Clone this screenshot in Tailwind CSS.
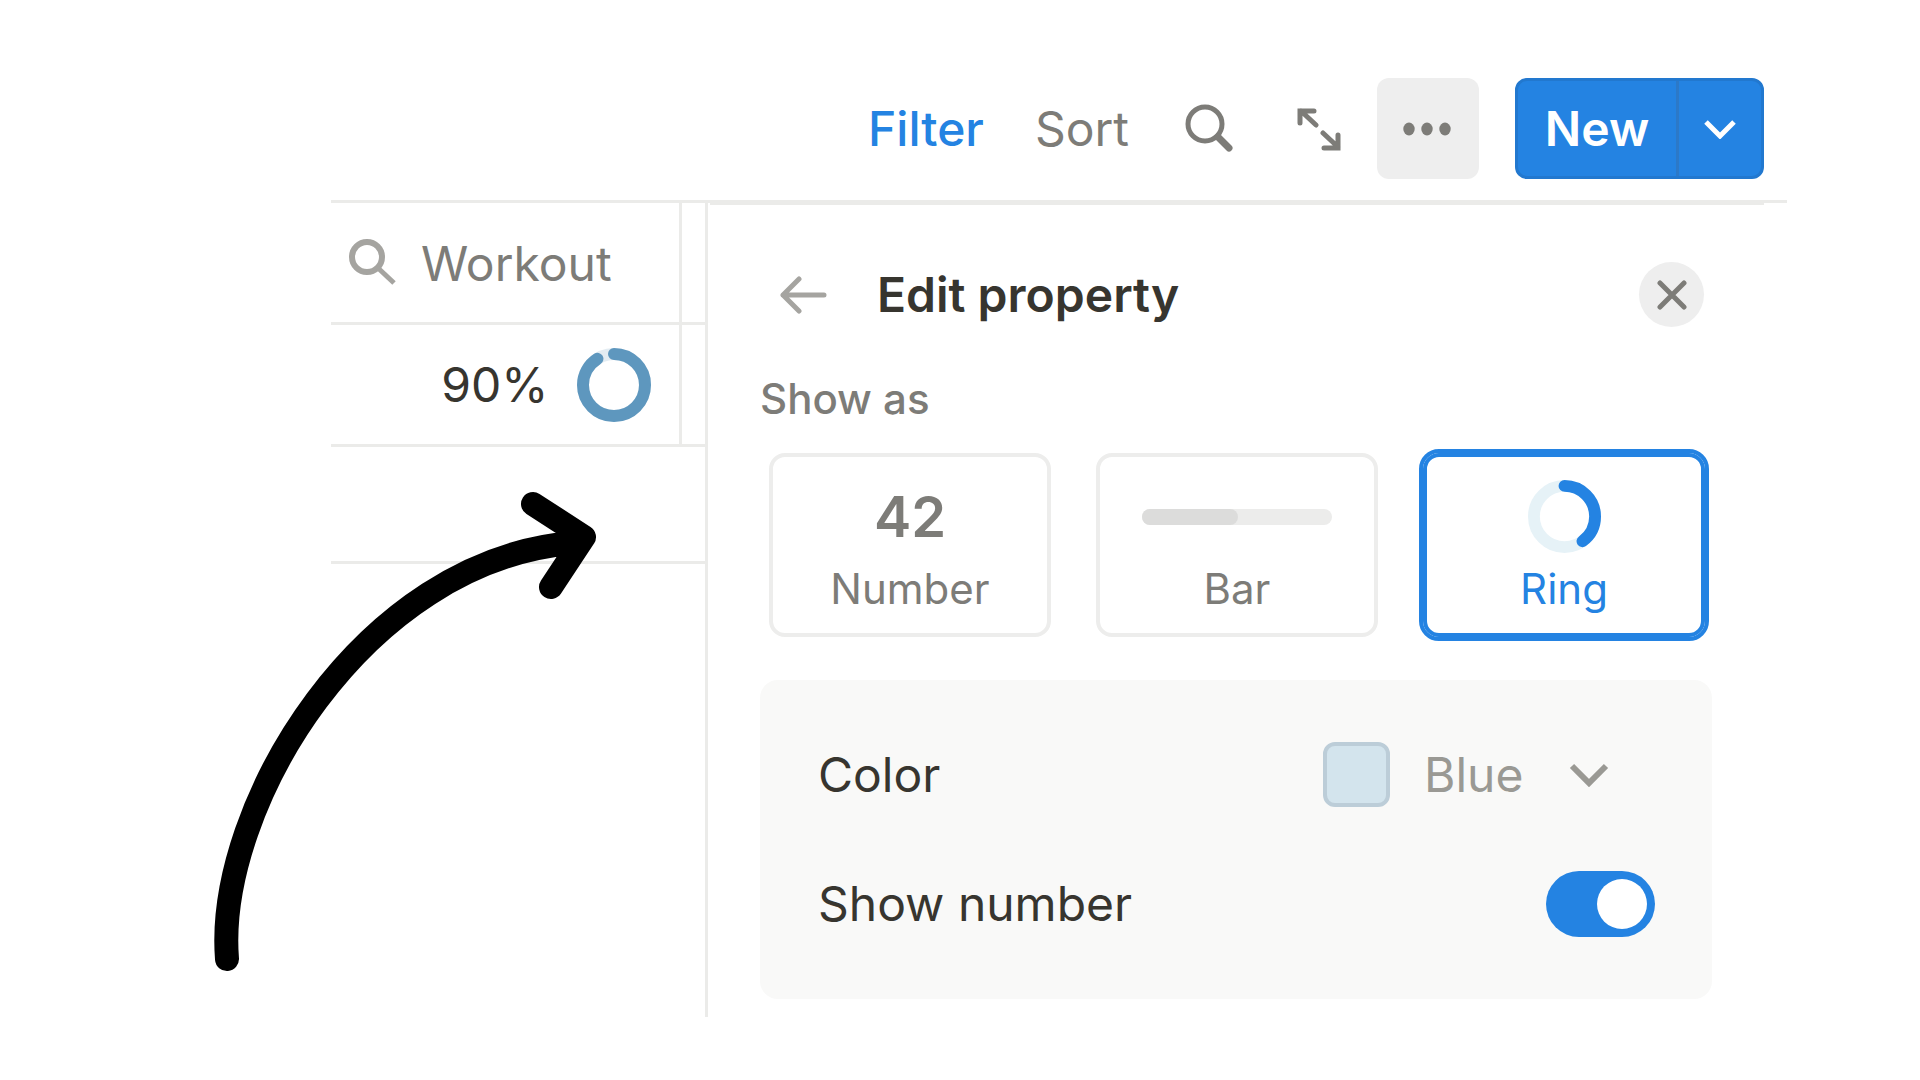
<!DOCTYPE html>
<html lang="en">
<head>
  <meta charset="UTF-8">
  <meta name="viewport" content="width=device-width, initial-scale=1.0">
  <title>Edit property</title>
  <script src="https://cdn.jsdelivr.net/npm/@tailwindcss/browser@4"></script>
</head>
<body class="bg-white font-['Inter',sans-serif] text-[#37352f]">
  <main class="relative pt-[78px] pr-[133px] pl-[331px]">

    <!-- Toolbar -->
    <header class="flex items-center justify-end border-b-3 border-[#ebebe9] pr-[23px] pb-[21px] text-5xl leading-[60px] text-[#7d7c78]">
      <button class="mr-[51px] font-medium text-[#2483e2]">Filter</button>
      <button class="mr-[55px]">Sort</button>
      <button class="mr-[63px]" aria-label="Search">
        <svg class="h-[50px] w-[50px]" viewBox="0 0 50 50" fill="none" stroke="currentColor">
          <circle cx="21" cy="20" r="17" stroke-width="5"/>
          <path d="M34 33l11 11" stroke-width="7" stroke-linecap="round"/>
        </svg>
      </button>
      <button class="mr-9" aria-label="Expand">
        <svg class="h-11 w-11" viewBox="0 0 44 44" fill="none" stroke="currentColor" stroke-width="5" stroke-linecap="round">
          <path d="M3 16V4h14M4 4l15 14M41 28v13H27M41 40L26 26"/>
        </svg>
      </button>
      <button class="mr-9 flex h-[101px] w-[102px] items-center justify-center rounded-xl bg-[#eeeeee]" aria-label="More">
        <svg class="h-4 w-[50px]" viewBox="0 0 50 16" fill="currentColor">
          <ellipse cx="6" cy="8" rx="5.7" ry="6.5"/>
          <ellipse cx="24" cy="8" rx="5.7" ry="6.5"/>
          <ellipse cx="42" cy="8" rx="5.7" ry="6.5"/>
        </svg>
      </button>
      <div class="flex h-[101px] overflow-hidden rounded-xl border-3 border-[#2278cf] bg-[#2483e2] text-white">
        <button class="w-[158px] font-semibold">New</button>
        <button class="flex w-[85px] items-center justify-center border-l-3 border-[#2c79c8]" aria-label="New from template">
          <svg class="h-5 w-8" viewBox="0 0 32 20" fill="none" stroke="currentColor" stroke-width="5">
            <path d="M2 3l14 14L30 3"/>
          </svg>
        </button>
      </div>
    </header>

    <div class="flex">
      <!-- Table -->
      <div class="w-[374px] shrink-0">
        <table class="w-full border-collapse text-5xl leading-[60px]">
          <thead>
            <tr class="h-[120px] border-b-3 border-[#ebebe9]">
              <th class="border-r-3 border-[#ebebe9] p-0 font-normal text-[#7d7c78]">
                <div class="flex items-center pt-1 pl-[18px]">
                  <svg class="h-[50px] w-[50px] text-[#a5a4a0]" viewBox="0 0 50 50" fill="none" stroke="currentColor">
                    <circle cx="18" cy="18" r="15" stroke-width="6"/>
                    <path d="M29 29l16 15" stroke-width="5"/>
                  </svg>
                  <span class="ml-[22px]">Workout</span>
                </div>
              </th>
              <th class="w-[25px] p-0"></th>
            </tr>
          </thead>
          <tbody>
            <tr class="h-[122px] border-b-3 border-[#ebebe9]">
              <td class="border-r-3 border-[#ebebe9] p-0">
                <div class="flex items-center justify-end gap-7 pt-0.5 pr-7">
                  <span>90%</span>
                  <svg class="h-[74px] w-[74px]" viewBox="0 0 74 74" fill="none" stroke-width="12">
                    <circle cx="37" cy="37" r="31" stroke="#e3ecf2"/>
                    <circle cx="37" cy="37" r="31" stroke="#5e97be" stroke-linecap="round" pathLength="100" stroke-dasharray="91 100" transform="rotate(-90 37 37)"/>
                  </svg>
                </div>
              </td>
              <td class="p-0"></td>
            </tr>
            <tr class="h-[117px] border-b-3 border-[#ebebe9]">
              <td class="p-0" colspan="2"></td>
            </tr>
          </tbody>
        </table>
      </div>

      <!-- Property panel -->
      <section class="flex-1 border-l-3 border-[#ebebe9] pb-[18px]">
        <hr class="mr-[23px] ml-0.5 border-t-2 border-[#ebebe9]">
        <div class="pr-[75px] pl-[52px]">
          <div class="flex items-center pt-[57px] pr-2 pl-5">
            <button class="text-[#a5a4a0]" aria-label="Back">
              <svg class="h-10 w-12" viewBox="0 0 48 40" fill="none" stroke="currentColor" stroke-width="5" stroke-linecap="round" stroke-linejoin="round">
                <path d="M19 4L3 20l16 16M3 20h41"/>
              </svg>
            </button>
            <h1 class="ml-[49px] text-5xl leading-[60px] font-semibold">Edit property</h1>
            <button class="ml-auto flex h-[65px] w-[65px] items-center justify-center rounded-full bg-[#eeeeee] text-[#7d7c78]" aria-label="Close">
              <svg class="h-[30px] w-[30px]" viewBox="0 0 30 30" fill="none" stroke="currentColor" stroke-width="5" stroke-linecap="round">
                <path d="M3 3l24 24M27 3L3 27"/>
              </svg>
            </button>
          </div>

          <h2 class="mt-11 text-[42px] leading-[56px] font-medium text-[#7d7c78]" id="show-as">Show as</h2>

          <div class="mt-[26px] grid grid-cols-3 gap-[45px] pr-[7px] pl-[9px] text-[42px] leading-[48px] text-[#7d7c78]" role="radiogroup" aria-labelledby="show-as">
            <label class="flex h-[184px] flex-col items-center rounded-2xl border-4 border-[#ededec] pt-[23px]">
              <input class="sr-only" type="radio" name="show-as" value="number">
              <span class="flex h-[73px] items-center text-[56px] font-semibold">42</span>
              <span class="mt-3">Number</span>
            </label>
            <label class="flex h-[184px] flex-col items-center rounded-2xl border-4 border-[#ededec] pt-[23px]">
              <input class="sr-only" type="radio" name="show-as" value="bar">
              <span class="flex h-[73px] items-center">
                <span class="block h-4 w-[190px] rounded-full bg-[#ececeb]">
                  <span class="block h-4 w-[96px] rounded-full bg-[#dcdcdb]"></span>
                </span>
              </span>
              <span class="mt-3">Bar</span>
            </label>
            <label class="flex h-[184px] flex-col items-center rounded-2xl border-4 border-[#2483e2] pt-[23px] text-[#2483e2] outline-4 outline-[#2483e2]">
              <input class="sr-only" type="radio" name="show-as" value="ring" checked>
              <svg class="h-[73px] w-[73px]" viewBox="0 0 74 74" fill="none" stroke-width="12">
                <circle cx="37" cy="37" r="31" stroke="#e6f2f7"/>
                <circle cx="37" cy="37" r="31" stroke="#2483e2" stroke-linecap="round" pathLength="100" stroke-dasharray="40 100" transform="rotate(-90 37 37)"/>
              </svg>
              <span class="mt-3">Ring</span>
            </label>
          </div>

          <div class="mt-[43px] flex flex-col gap-16 rounded-[18px] bg-[#f9f9f8] py-[62px] pr-[57px] pl-[58px] text-5xl leading-[60px]">
            <div class="flex h-[65px] items-center">
              <label for="color">Color</label>
              <span class="ml-auto h-[65px] w-[67px] rounded-xl border-4 border-[#bccdd8] bg-[#d3e4ed]"></span>
              <span class="relative ml-[34px] flex items-center pr-[47px] text-[#9a9994]">
                <select class="w-[184px] appearance-none bg-transparent" id="color">
                  <option>Blue</option>
                </select>
                <svg class="pointer-events-none absolute right-[46px] h-6 w-10" viewBox="0 0 40 24" fill="none" stroke="currentColor" stroke-width="6">
                  <path d="M3 3l17 17L37 3"/>
                </svg>
              </span>
            </div>
            <div class="flex h-[66px] items-center justify-between">
              <label for="show-number">Show number</label>
              <input class="h-[66px] w-[109px] appearance-none rounded-full bg-[#2483e2] p-2 before:ml-auto before:block before:h-[50px] before:w-[50px] before:rounded-full before:bg-white" type="checkbox" role="switch" id="show-number" checked>
            </div>
          </div>
        </div>
      </section>
    </div>

    <!-- Hand-drawn pointer over the table -->
    <svg class="pointer-events-none absolute top-[480px] left-[200px] h-[500px] w-[400px]" viewBox="200 480 400 500" fill="none" stroke="#000" stroke-width="24" stroke-linecap="round" stroke-linejoin="round" aria-hidden="true">
      <path d="M227 959C215 807 363 560 573 543M533 504l51 33-33 50"/>
    </svg>
  </main>
</body>
</html>
